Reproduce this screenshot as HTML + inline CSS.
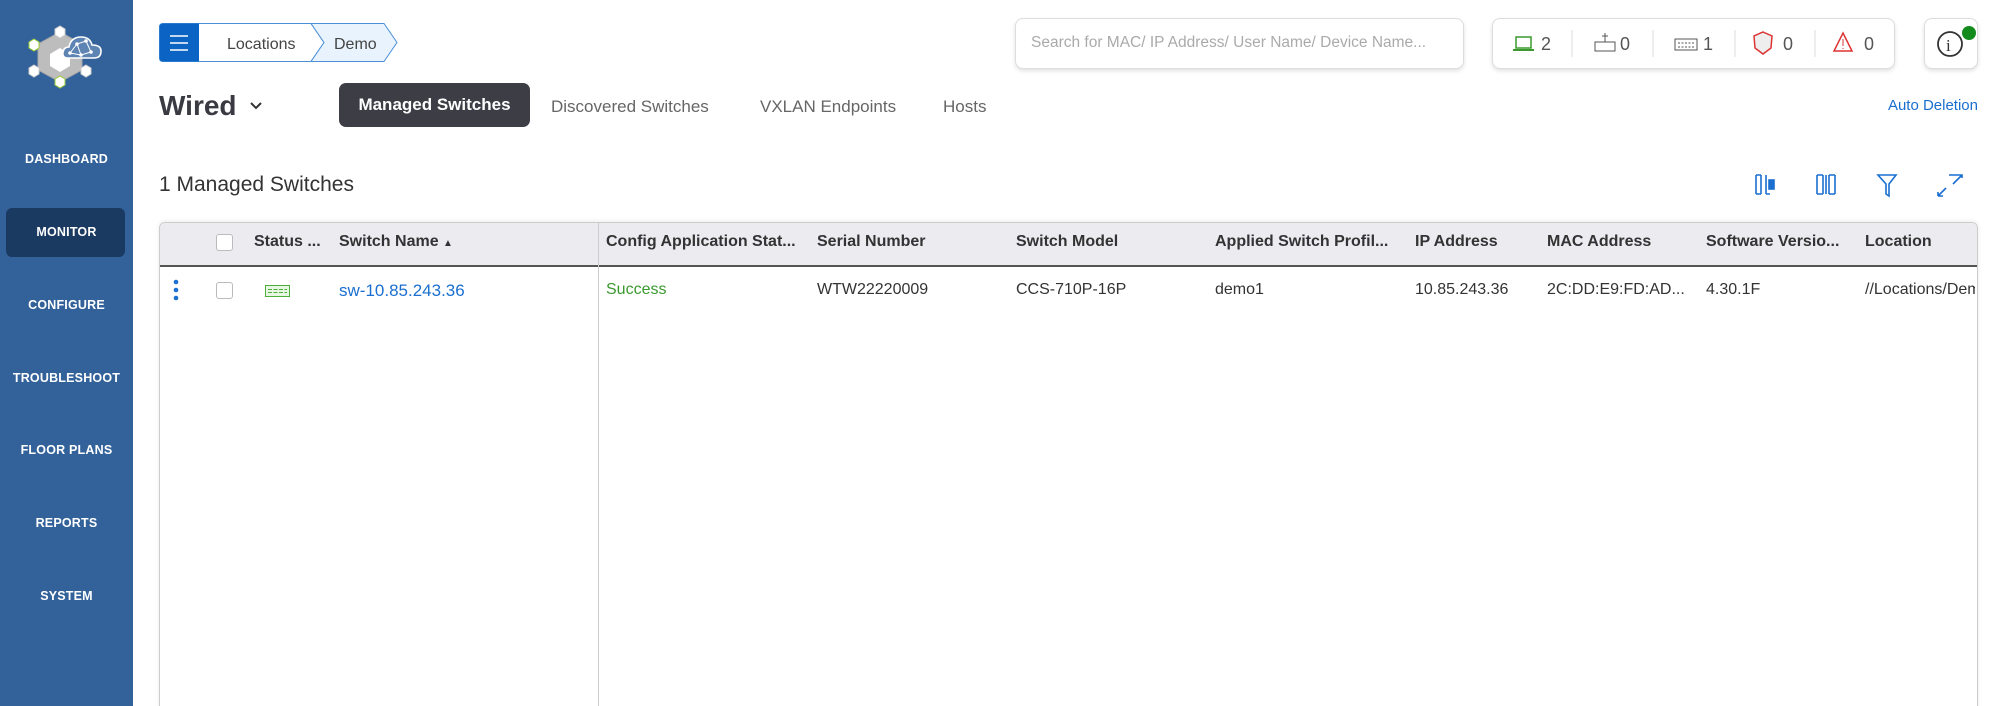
<!DOCTYPE html>
<html style="overflow:hidden;height:706px"><head><meta charset="utf-8"><style>
*{box-sizing:border-box;margin:0;padding:0}
body{width:1999px;height:706px;overflow:hidden;background:#fff;font-family:"Liberation Sans",sans-serif;position:relative;color:#333}
.sb{position:absolute;left:0;top:0;width:133px;height:706px;background:#33629a}
.nav{position:absolute;left:0;width:133px;text-align:center;color:#fff;font-weight:bold;font-size:12.5px;letter-spacing:.2px}
.mon{position:absolute;left:6px;top:208px;width:119px;height:49px;background:#1b3a62;border-radius:6px}
.a{position:absolute;white-space:nowrap}
.box{position:absolute;border:1px solid #ddd;border-radius:8px;box-shadow:0 2px 4px rgba(0,0,0,.12);background:#fff}
.th{position:absolute;top:233px;font-size:16px;font-weight:bold;color:#333;white-space:nowrap}
.td{position:absolute;top:281px;font-size:16px;color:#333;white-space:nowrap}
.cb{position:absolute;width:17px;height:17px;border:1px solid #bbb;border-radius:3px;background:#fff}
</style></head><body>
<div class="sb"></div>
<svg class="a" style="left:24px;top:20px" width="90" height="76" viewBox="24 20 90 76">
<polygon points="60,32 82,44 82,70 60,82 38,70 38,44" fill="#bdbdbd" stroke="#a8a8a8"/>
<polygon points="60,48 70,54 70,66 60,72 50,66 50,54" fill="#fff"/>
<g fill="#fff" stroke="#ccc"><polygon points="60,26 65,29 65,35 60,38 55,35 55,29"/><polygon points="86,65 91,68 91,74 86,77 81,74 81,68"/><polygon points="34,65 39,68 39,74 34,77 29,74 29,68"/></g>
<g fill="#fff" stroke="#9c3"><polygon points="34,39 39,42 39,48 34,51 29,48 29,42"/><polygon points="60,76 65,79 65,85 60,88 55,85 55,79"/></g>
<path d="M68 58 Q62 58 63 52 Q64 47 69 47 Q71 37 81 37 Q90 37 92 45 Q101 45 101 51 Q101 58 94 58 Z" fill="#5d84b3" stroke="#fff" stroke-width="1.6"/>
<g stroke="#fff" stroke-width="1" fill="none"><path d="M70 53 L77 44 L86 41 L91 52 L81 55 Z M77 44 L81 55"/></g>
<g fill="#fff"><circle cx="70" cy="53" r="1.8"/><circle cx="77" cy="44" r="1.8"/><circle cx="86" cy="41" r="1.8"/><circle cx="91" cy="52" r="1.8"/><circle cx="81" cy="55" r="1.8"/></g>
</svg>
<div class="mon"></div>
<div class="nav" style="top:152px">DASHBOARD</div>
<div class="nav" style="top:225px">MONITOR</div>
<div class="nav" style="top:298px">CONFIGURE</div>
<div class="nav" style="top:371px">TROUBLESHOOT</div>
<div class="nav" style="top:443px">FLOOR PLANS</div>
<div class="nav" style="top:516px">REPORTS</div>
<div class="nav" style="top:589px">SYSTEM</div>

<svg class="a" style="left:159px;top:23px" width="242" height="40">
<path d="M4 0.5 H152 L165 19.5 L152 38.5 H4 Q0.5 38.5 0.5 35 V4 Q0.5 0.5 4 0.5Z" fill="#fff" stroke="#4a8fd8"/>
<path d="M152 0.5 H225 L238 19.5 L225 38.5 H152 L165 19.5Z" fill="#e8f3fd" stroke="#4a8fd8"/>
<path d="M4 0.5 H40 V38.5 H4 Q0.5 38.5 0.5 35 V4 Q0.5 0.5 4 0.5Z" fill="#0b64c4"/>
<g stroke="#fff" stroke-width="1.5"><path d="M11 13H29M11 20H29M11 27H29"/></g>
<text x="68" y="26" font-size="16" fill="#444" font-family="Liberation Sans">Locations</text>
<text x="175" y="26" font-size="16" fill="#444" font-family="Liberation Sans">Demo</text>
</svg>

<div class="a" style="left:159px;top:90px;font-size:28px;font-weight:bold;color:#3a3a42">Wired</div>
<svg class="a" style="left:249px;top:101px" width="14" height="10"><path d="M2 2 L7 7 L12 2" stroke="#333" stroke-width="2" fill="none"/></svg>
<div class="a" style="left:339px;top:83px;width:191px;height:44px;background:#3d3d46;border-radius:7px;color:#fff;font-weight:bold;font-size:17px;text-align:center;line-height:44px">Managed Switches</div>
<div class="a" style="left:551px;top:97px;font-size:17px;color:#666">Discovered Switches</div>
<div class="a" style="left:760px;top:97px;font-size:17px;color:#666">VXLAN Endpoints</div>
<div class="a" style="left:943px;top:97px;font-size:17px;color:#666">Hosts</div>
<div class="a" style="right:21px;top:97px;font-size:15px;color:#1a6fd0">Auto Deletion</div>

<div class="box" style="left:1015px;top:18px;width:449px;height:51px"></div>
<div class="a" style="left:1031px;top:34px;font-size:15.5px;color:#aaa">Search for MAC/ IP Address/ User Name/ Device Name...</div>
<div class="box" style="left:1492px;top:18px;width:403px;height:51px"></div>
<svg class="a" style="left:1492px;top:18px" width="403" height="51" font-family="Liberation Sans" font-size="18" fill="#555">
<rect x="24" y="19" width="15" height="11" fill="none" stroke="#3a9a2e" stroke-width="1.5"/><path d="M21 32H42" stroke="#3a9a2e" stroke-width="2"/><text x="49" y="32">2</text>
<path d="M80 12V39M161 12V39M243 12V39M323 12V39" stroke="#ddd"/>
<rect x="103" y="24" width="20" height="9" fill="none" stroke="#555"/><path d="M113 24V15M110 18h6" stroke="#555"/><text x="128" y="32">0</text>
<rect x="183" y="21" width="22" height="11" fill="none" stroke="#555"/><path d="M186 25h16M186 29h16" stroke="#555" stroke-dasharray="2 1.5"/><text x="211" y="32">1</text>
<path d="M271 14 L280 18 L279 30 L271 36 L263 30 L262 18Z" fill="#eee" stroke="#d33" stroke-width="1.5"/><text x="291" y="32">0</text>
<path d="M351 15 L360 33 H342Z" fill="none" stroke="#d33" stroke-width="1.5"/><path d="M351 21V28M351 30V31" stroke="#d33"/><text x="372" y="32">0</text>
</svg>
<div class="box" style="left:1924px;top:18px;width:54px;height:51px"></div>
<svg class="a" style="left:1936px;top:24px" width="44" height="40"><circle cx="14" cy="20" r="12" fill="none" stroke="#333" stroke-width="1.8"/><text x="10" y="27" font-size="17" font-family="Liberation Serif" fill="#333">i</text><circle cx="33" cy="9" r="7" fill="#138a1c"/></svg>

<div class="a" style="left:159px;top:173px;font-size:21px;color:#333">1 Managed Switches</div>
<svg class="a" style="left:1750px;top:170px" width="220" height="30" fill="none" stroke="#1a6fd0" stroke-width="1.6">
<path d="M6 5V24M11 5V24M6 5h5M6 24h5M16 5V24M16 24h4"/><rect x="19" y="10" width="5" height="9" fill="#1a6fd0"/>
<path d="M67 5V24M73 5V24M67 5h6M67 24h6M79 5V24M85 5V24M79 5h6M79 24h6M76 5V24"/>
<path d="M128 5H146L139 14V26L136 24V14Z"/>
<path d="M199 5L212 5L212 8M212 5L203 14M188 26L188 22M188 26L193 26M188 26L196 18"/>
</svg>

<div class="a" style="left:159px;top:222px;width:1819px;height:500px;border:1px solid #ccc;border-radius:6px;box-shadow:0 -1px 4px rgba(0,0,0,.08)"></div>
<div class="a" style="left:160px;top:223px;width:1817px;height:44px;background:#ebebf0;border-radius:6px 6px 0 0;border-bottom:2px solid #555"></div>
<div class="a" style="left:598px;top:223px;width:1px;height:483px;background:#ccc"></div>
<div class="cb" style="left:216px;top:234px"></div>
<div class="th" style="left:254px">Status ...</div>
<div class="th" style="left:339px">Switch Name <span style="font-size:10px">▲</span></div>
<div class="th" style="left:606px">Config Application Stat...</div>
<div class="th" style="left:817px">Serial Number</div>
<div class="th" style="left:1016px">Switch Model</div>
<div class="th" style="left:1215px">Applied Switch Profil...</div>
<div class="th" style="left:1415px">IP Address</div>
<div class="th" style="left:1547px">MAC Address</div>
<div class="th" style="left:1706px">Software Versio...</div>
<div class="th" style="left:1865px">Location</div>

<svg class="a" style="left:172px;top:279px" width="8" height="24" fill="#1a6fd0"><circle cx="4" cy="3" r="2.3"/><circle cx="4" cy="11" r="2.3"/><circle cx="4" cy="19" r="2.3"/></svg>
<div class="cb" style="left:216px;top:282px"></div>
<svg class="a" style="left:265px;top:285px" width="25" height="12"><rect x="0.5" y="0.5" width="24" height="11" fill="#e8f6e4" stroke="#4caf3a"/><path d="M3 4.5h19M3 7.5h19" stroke="#4caf3a" stroke-dasharray="4 1.5"/></svg>
<div class="td" style="left:339px;color:#1a6fd0;font-size:17px">sw-10.85.243.36</div>
<div class="td" style="left:606px;color:#3a9a2e">Success</div>
<div class="td" style="left:817px">WTW22220009</div>
<div class="td" style="left:1016px">CCS-710P-16P</div>
<div class="td" style="left:1215px">demo1</div>
<div class="td" style="left:1415px">10.85.243.36</div>
<div class="td" style="left:1547px">2C:DD:E9:FD:AD...</div>
<div class="td" style="left:1706px">4.30.1F</div>
<div class="td" style="left:1865px;width:110px;overflow:hidden">//Locations/Demo</div>
</body></html>
